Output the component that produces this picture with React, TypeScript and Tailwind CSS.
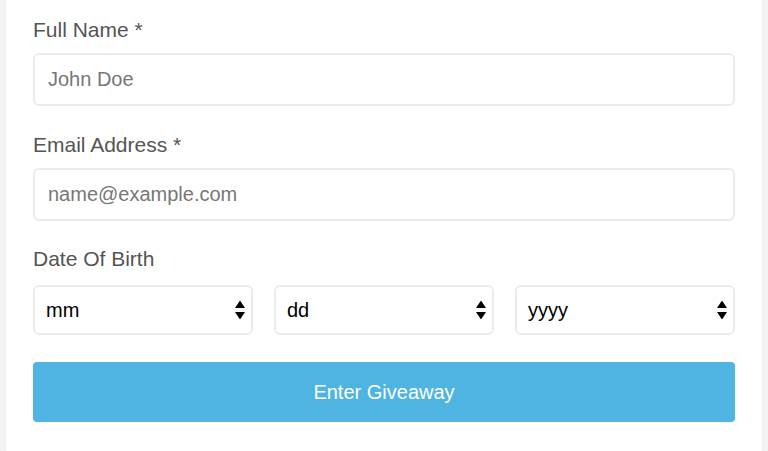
import React from "react";

const font = { fontFamily: '"Liberation Sans", Arial, Helvetica, sans-serif' };

function Arrows() {
  return (
    <svg
      viewBox="0 0 10 19"
      className="pointer-events-none absolute right-[8px] top-1/2 h-[19px] w-[10px] -translate-y-1/2"
    >
      <path d="M5 0 L10 7.5 L0 7.5 Z" fill="#000" />
      <path d="M5 19 L10 11.5 L0 11.5 Z" fill="#000" />
    </svg>
  );
}

function DateSelect({ placeholder, options }: { placeholder: string; options: string[] }) {
  return (
    <div className="relative flex-1">
      <select
        defaultValue=""
        className="h-[50px] w-full appearance-none rounded-[6px] border-2 border-[#ebebeb] bg-white pl-[11px] pr-8 text-[20px] text-black outline-none"
      >
        <option value="" disabled>
          {placeholder}
        </option>
        {options.map((o) => (
          <option key={o} value={o}>
            {o}
          </option>
        ))}
      </select>
      <Arrows />
    </div>
  );
}

function Field({ label, placeholder, type = "text" }: { label: string; placeholder: string; type?: string }) {
  return (
    <div>
      <label className="block text-[21px] leading-[31px] text-[#555]">{label}</label>
      <input
        type={type}
        placeholder={placeholder}
        className="mt-[8px] h-[53px] w-full rounded-[6px] border-2 border-[#ebebeb] bg-white px-[13px] text-[20px] text-[#333] outline-none placeholder:text-[#777]"
      />
    </div>
  );
}

export default function App() {
  const months = Array.from({ length: 12 }, (_, i) => String(i + 1).padStart(2, "0"));
  const days = Array.from({ length: 31 }, (_, i) => String(i + 1).padStart(2, "0"));
  const years = Array.from({ length: 100 }, (_, i) => String(2024 - i));

  return (
    <div className="min-h-[451px] w-full bg-[#f3f3f3]" style={font}>
      <div className="mx-[6px] min-h-[451px] bg-white px-[27px] pt-[14px] shadow-[0_0_3px_rgba(0,0,0,0.06)]">
        <Field label="Full Name *" placeholder="John Doe" />
        <div className="mt-[23px]">
          <Field label="Email Address *" placeholder="name@example.com" type="email" />
        </div>
        <div className="mt-[22px]">
          <label className="block text-[21px] leading-[31px] text-[#555]">Date Of Birth</label>
          <div className="mt-[11px] flex gap-[21px]">
            <DateSelect placeholder="mm" options={months} />
            <DateSelect placeholder="dd" options={days} />
            <DateSelect placeholder="yyyy" options={years} />
          </div>
        </div>
        <button
          type="button"
          className="mt-[27px] h-[60px] w-full rounded-[4px] bg-[#4fb4e1] text-[20px] text-white"
        >
          Enter Giveaway
        </button>
      </div>
    </div>
  );
}
